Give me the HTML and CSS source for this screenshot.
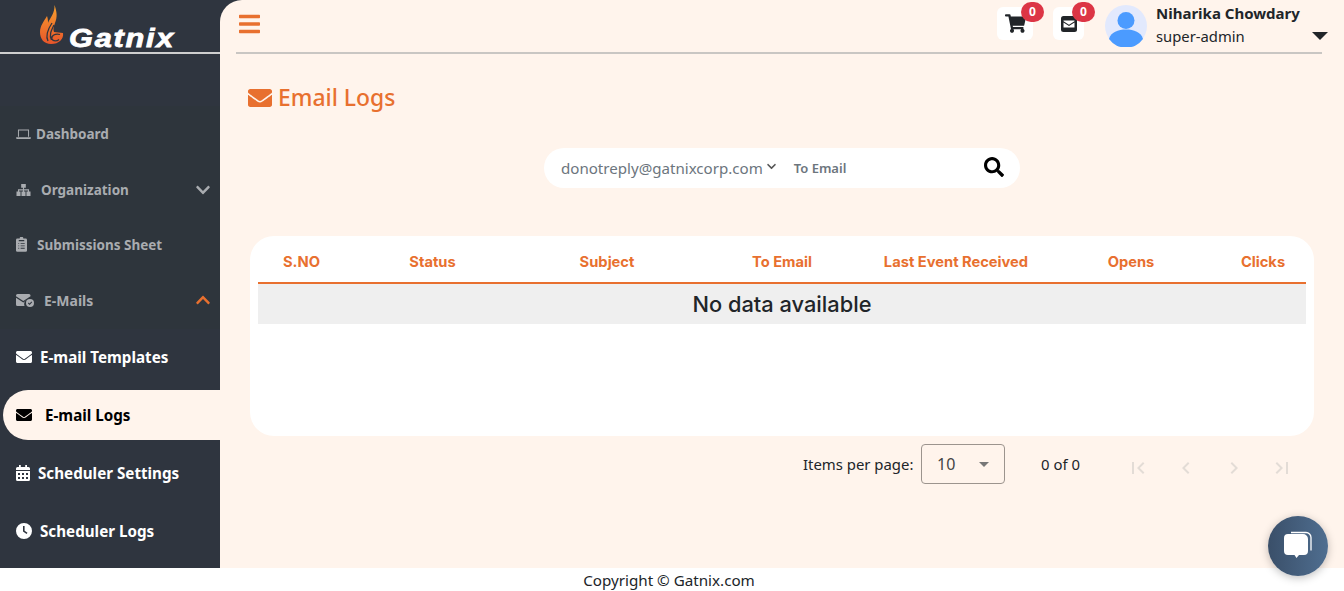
FILE: index.html
```html
<!DOCTYPE html>
<html lang="en">
<head>
<meta charset="utf-8">
<title>Email Logs</title>
<link rel="stylesheet" href="styles.css">
</head>
<body>
<svg class="defs" width="0" height="0" aria-hidden="true">
  <defs>
    <symbol id="i-env" viewBox="0 0 512 512"><path d="M502.3 190.8c3.9-3.1 9.7-.2 9.7 4.7V400c0 26.5-21.5 48-48 48H48c-26.5 0-48-21.5-48-48V195.6c0-5 5.7-7.8 9.7-4.7 22.4 17.4 52.1 39.5 154.1 113.6 21.1 15.4 56.7 47.8 92.2 47.6 35.7.3 72-32.8 92.3-47.6 102-74.1 131.6-96.3 154-113.7zM256 320c23.2.4 56.6-29.2 73.4-41.4 132.7-96.3 142.8-104.7 173.4-128.7 5.8-4.5 9.2-11.5 9.2-18.9v-19c0-26.5-21.5-48-48-48H48C21.5 64 0 85.5 0 112v19c0 7.4 3.4 14.3 9.2 18.9 30.6 23.9 40.7 32.4 173.4 128.7 16.8 12.2 50.2 41.8 73.4 41.4z"/></symbol>
    <symbol id="i-chev" viewBox="0 0 448 512"><path d="M207.029 381.476L12.686 187.132c-9.373-9.373-9.373-24.569 0-33.941l22.667-22.667c9.357-9.357 24.522-9.375 33.901-.04L224 284.505l154.745-154.021c9.379-9.335 24.544-9.317 33.901.04l22.667 22.667c9.373 9.373 9.373 24.569 0 33.941L240.971 381.476c-9.373 9.372-24.569 9.372-33.942 0z"/></symbol>
  </defs>
</svg>
<div class="shell">
  <aside class="sidebar">
    <div class="brand">
      <svg class="flame" viewBox="0 0 24 40">
        <defs><linearGradient id="fl" x1="0" y1="0" x2="0" y2="1"><stop offset="0" stop-color="#f6a02e"/><stop offset="1" stop-color="#e8552a"/></linearGradient></defs>
        <path fill="url(#fl)" d="M14.500 0C17 7 17.500 12 15 18 13.500 22 13 25 14 27L23 28C24 34 19 39 11 39 4 39 0 34 0 27 0 21 4 16 7 11 8 14 8 16 8 18 10 13 15 8 14.500 0z"/>
        <path fill="none" stroke="#2f353f" stroke-width="1.300" d="M8 36C5 30 8 24 12 18M11.500 35C9 30 11 26 14 20M20 29.500C15 28 11 31 12 34 13 36.500 17 36.500 19 34.500"/>
      </svg>
      <span class="brand-name">Gatnix</span>
    </div>
    <nav class="nav">
      <a class="item"><svg class="ico ico-laptop" viewBox="0 0 16 12"><path fill="none" stroke="currentColor" stroke-width="1.1" d="M2.5 8.5V1h11v7.5"/><path fill="currentColor" d="M0 9h16v1a1.5 1.5 0 0 1-1.5 1h-13A1.5 1.5 0 0 1 0 10z"/></svg><span>Dashboard</span></a>
      <a class="item"><svg class="ico ico-map" viewBox="0 0 16 13"><path fill="currentColor" d="M5.5 0h5v4H8.6v1.8H14v2.4h1.6V13h-4.4V8.2h1.6V7H8.6v1.2h1.6V13H5.8V8.2h1.6V7H3.2v1.2h1.6V13H.4V8.2H2V5.8h5.4V4H5.5z"/></svg><span>Organization</span><svg class="chev"><use href="#i-chev"/></svg></a>
      <a class="item"><svg class="ico ico-clip" viewBox="0 0 12 16"><path fill="currentColor" fill-rule="evenodd" d="M4 1.5a2 2 0 0 1 4 0h2.5A1.5 1.5 0 0 1 12 3v11.5a1.5 1.5 0 0 1-1.500 1.500h-9A1.500 1.500 0 0 1 0 14.500V3a1.500 1.500 0 0 1 1.500-1.500zM3 3h6v1.500H3zM2.500 6.500h1v1h-1zM5 6.500h4.500v1H5zM2.500 9h1v1h-1zM5 9h4.500v1H5zM2.500 11.500h1v1h-1zM5 11.500h4.500v1H5z"/></svg><span>Submissions Sheet</span></a>
      <a class="item item-mails"><svg class="ico ico-mailcheck" viewBox="0 0 18 13"><path fill="currentColor" d="M0 1.500A1.500 1.500 0 0 1 1.500 0h11.500A1.500 1.500 0 0 1 14.500 1.500v.8L7.300 7 0 2.300zM0 3.700l7.300 4.700 4-2.600a5 5 0 0 0-2.800 6.200H1.500A1.500 1.500 0 0 1 0 10.500z"/><circle cx="14" cy="9" r="4" fill="currentColor"/><path fill="none" stroke="#2f353f" stroke-width="1.100" d="M12.300 9l1.300 1.300 2.200-2.400"/></svg><span class="mails-label">E-Mails</span><svg class="chev chev-up"><use href="#i-chev"/></svg></a>
      <div class="subnav">
        <a class="sub"><svg class="sico"><use href="#i-env"/></svg><span>E-mail Templates</span></a>
        <a class="sub active"><svg class="sico"><use href="#i-env"/></svg><span>E-mail Logs</span></a>
        <a class="sub"><svg class="sico sico-cal" viewBox="0 0 14 16"><path fill="currentColor" fill-rule="evenodd" d="M3 0h1.800v2h4.400V0H11v2h1.500A1.500 1.500 0 0 1 14 3.500V5H0V3.500A1.500 1.500 0 0 1 1.500 2H3zM0 6h14v8.500a1.500 1.500 0 0 1-1.500 1.500h-11A1.500 1.500 0 0 1 0 14.500zM2 8v2h2V8zm4 0v2h2V8zm4 0v2h2V8zM2 12v2h2v-2zm4 0v2h2v-2zm4 0v2h2v-2z"/></svg><span>Scheduler Settings</span></a>
        <a class="sub"><svg class="sico" viewBox="0 0 16 16"><path fill="currentColor" fill-rule="evenodd" d="M8 0a8 8 0 1 1 0 16A8 8 0 0 1 8 0zM7 3v5.500l3.600 2.500.9-1.200L8.600 7.800V3z"/></svg><span>Scheduler Logs</span></a>
      </div>
    </nav>
  </aside>

  <main class="main">
    <header class="topbar">
      <svg class="menu" viewBox="0 0 448 512"><path d="M16 132h416c8.837 0 16-7.163 16-16V76c0-8.837-7.163-16-16-16H16C7.163 60 0 67.163 0 76v40c0 8.837 7.163 16 16 16zm0 160h416c8.837 0 16-7.163 16-16v-40c0-8.837-7.163-16-16-16H16c-8.837 0-16 7.163-16 16v40c0 8.837 7.163 16 16 16zm0 160h416c8.837 0 16-7.163 16-16v-40c0-8.837-7.163-16-16-16H16c-8.837 0-16 7.163-16 16v40c0 8.837 7.163 16 16 16z"/></svg>
      <div class="top-right">
        <div class="tool tool-cart">
          <svg class="cart" viewBox="0 0 576 512"><path d="M528.12 301.319l47.273-208C578.806 78.301 567.391 64 551.99 64H159.208l-9.166-44.81C147.758 8.021 137.93 0 126.529 0H24C10.745 0 0 10.745 0 24v16c0 13.255 10.745 24 24 24h69.883l70.248 343.435C147.325 417.1 136 435.222 136 456c0 30.928 25.072 56 56 56s56-25.072 56-56c0-15.674-6.447-29.835-16.824-40h209.647C430.447 426.165 424 440.326 424 456c0 30.928 25.072 56 56 56s56-25.072 56-56c0-22.172-12.888-41.332-31.579-50.405l5.517-24.276c3.413-15.018-8.002-29.319-23.403-29.319H218.117l-6.545-32h293.145c11.206 0 20.920-7.754 23.403-18.681z"/></svg>
          <span class="badge">0</span>
        </div>
        <div class="tool tool-mail">
          <svg class="mailbox" viewBox="0 0 16 16"><rect width="16" height="16" rx="2.500" fill="#212529"/><path fill="#fff" d="M2.500 4.500h11v.8L8 8.800 2.500 5.300zM2.500 6.500L8 10l5.500-3.500v5h-11z"/></svg>
          <span class="badge">0</span>
        </div>
        <svg class="avatar" viewBox="0 0 42 42"><circle cx="21" cy="21" r="21" fill="#e2e9fd"/><circle cx="21" cy="15.500" r="8.500" fill="#4b9bff"/><path fill="#4b9bff" d="M4 34c2-7 9-9.500 17-9.500S36 27 38 34a21 21 0 0 1-34 0z"/></svg>
        <div class="user">
          <div class="user-name">Niharika Chowdary</div>
          <div class="user-role">super-admin</div>
        </div>
        <span class="caret"></span>
      </div>
    </header>

    <h1 class="title"><svg class="title-ico"><use href="#i-env"/></svg>Email Logs</h1>

    <div class="search">
      <span class="from">donotreply@gatnixcorp.com</span>
      <svg class="from-chev"><use href="#i-chev"/></svg>
      <span class="to">To Email</span>
      <svg class="mag" viewBox="0 0 512 512"><path d="M505 442.700L405.300 343c-4.500-4.500-10.600-7-17-7H372c27.600-35.300 44-79.700 44-128C416 93.100 322.900 0 208 0S0 93.100 0 208s93.100 208 208 208c48.300 0 92.700-16.400 128-44v16.300c0 6.400 2.500 12.500 7 17l99.700 99.700c9.400 9.400 24.600 9.400 33.900 0l28.300-28.300c9.400-9.400 9.400-24.600.1-34zM208 336c-70.700 0-128-57.200-128-128 0-70.700 57.200-128 128-128 70.700 0 128 57.200 128 128 0 70.700-57.200 128-128 128z"/></svg>
    </div>

    <section class="card">
      <div class="thead">
        <span>S.NO</span><span>Status</span><span>Subject</span><span>To Email</span><span>Last Event Received</span><span>Opens</span><span>Clicks</span>
      </div>
      <div class="nodata">No data available</div>
    </section>

    <div class="pager">
      <span class="pager-label">Items per page:</span>
      <div class="pager-select"><span>10</span><i class="pager-arrow"></i></div>
      <span class="pager-range">0 of 0</span>
      <div class="pager-btns">
        <svg viewBox="0 0 24 24"><path d="M18.410 16.590L13.820 12l4.590-4.590L17 6l-6 6 6 6zM6 6h2v12H6z"/></svg>
        <svg viewBox="0 0 24 24"><path d="M15.410 7.410L14 6l-6 6 6 6 1.410-1.410L10.830 12z"/></svg>
        <svg viewBox="0 0 24 24"><path d="M10 6L8.590 7.410 13.170 12l-4.580 4.590L10 18l6-6z"/></svg>
        <svg viewBox="0 0 24 24"><path d="M5.590 7.410L10.180 12l-4.590 4.590L7 18l6-6-6-6zM16 6h2v12h-2z"/></svg>
      </div>
    </div>
  </main>
</div>
<footer class="footer">Copyright © Gatnix.com</footer>
<button class="chat" aria-label="Chat">
  <svg viewBox="0 0 32 32"><path fill="none" stroke="#fff" stroke-width="1.300" d="M9 2.500h15a5 5 0 0 1 5 5v13"/><path fill="#fff" d="M6 4h15a5 5 0 0 1 5 5v12a4 4 0 0 1-4 4h-5l-2.500 3-2-3H6a4 4 0 0 1-4-4V8a4 4 0 0 1 4-4z"/></svg>
</button>
</body>
</html>
```
FILE: styles.css
```css
* { box-sizing: border-box; }
html, body { margin: 0; height: 591px; overflow: hidden; background: #fff; }
body { font-family: "Noto Sans", "Open Sans", sans-serif; color: #212529; position: relative; }
.defs { position: absolute; }

.shell { display: grid; grid-template-columns: 220px 1fr; height: 568px; background: #2f353f; }

/* sidebar */
.sidebar { display: flex; flex-direction: column; }
.brand { height: 54px; border-bottom: 2px solid #cfcfcf; display: flex; align-items: flex-start; padding: 5px 0 0 40px; gap: 5px; }
.flame { width: 24px; height: 40px; }
.brand-name { font: italic 700 26px/1 "Liberation Sans", sans-serif; color: #fff; letter-spacing: 1.500px; margin-top: 20px; -webkit-text-stroke: .8px #fff; transform: scaleX(1.18); transform-origin: left center; }
.nav { padding-top: 52px; display: flex; flex-direction: column; }
.item { height: 56px; display: flex; align-items: center; padding: 0 10px 0 16px; color: #a9acb0; font-weight: 700; font-size: 13.500px; background: #2e353c; }
.item:nth-child(3) { height: 55px; padding-bottom: 2px; }
.item-mails { padding-bottom: 2px; }
.ico { flex: none; color: #a9acb0; }
.ico-laptop { width: 15px; height: 11px; margin-right: 5px; }
.ico-map { width: 15px; height: 12px; margin-right: 10px; }
.ico-clip { width: 11px; height: 15px; margin-right: 10px; }
.ico-mailcheck { width: 18px; height: 13px; margin-right: 10px; }
.mails-label { font-size: 14px; }
.chev { width: 14px; height: 16px; margin-left: auto; fill: #a9acb0; }
.chev-up { fill: #e8702f; transform: rotate(180deg); }
.subnav { padding-top: 3px; display: flex; flex-direction: column; gap: 8px; }
.sub { height: 50px; margin-left: 3px; padding-left: 13px; display: flex; align-items: center; color: #fff; font-weight: 700; font-size: 15.200px; border-radius: 25px 0 0 25px; }
.sub.active { background: #fff4ec; color: #000; }
.sico { width: 16px; height: 16px; fill: #fff; flex: none; margin-right: 8px; }
.active .sico { fill: #000; margin-right: 13px; }
.sico-cal { width: 14px; }

/* main */
.main { background: #fff4ec; border-radius: 22px 0 0 0; padding: 0 22px 0 16px; display: flex; flex-direction: column; min-width: 0; }
.topbar { height: 54px; border-bottom: 2px solid #c9c6c3; display: flex; align-items: flex-start; justify-content: space-between; }
.menu { width: 21px; height: 24px; fill: #e8702f; margin: 12px 0 0 3px; }
.top-right { display: flex; align-items: flex-start; margin-right: -6px; }
.tool { position: relative; height: 33px; margin-top: 7px; background: #fff; border-radius: 6px; display: flex; align-items: center; justify-content: center; }
.tool-cart { width: 36px; margin-right: 20px; }
.tool-mail { width: 31px; margin-right: 21px; }
.cart { width: 21px; height: 19px; fill: #212529; margin: 0 0 0 1px; }
.mailbox { width: 16px; height: 16px; }
.badge { position: absolute; right: -11px; top: -5px; width: 23px; height: 20px; border-radius: 10px; background: #dc3545; color: #fff; font-size: 12px; font-weight: 700; line-height: 20px; text-align: center; }
.avatar { width: 42px; height: 42px; margin-top: 5px; flex: none; }
.user { margin-left: 9px; width: 156px; }
.user-name { font-size: 15px; font-weight: 700; line-height: 20px; margin-top: 3px; color: #212529; }
.user-role { font-size: 14.800px; line-height: 20px; margin-top: 3px; color: #212529; }
.caret { width: 0; height: 0; border: 8px solid transparent; border-top: 8px solid #212529; border-bottom: 0; margin-top: 32px; }

.title { margin: 30px 0 0 12px; height: 28px; font-size: 22.900px; font-weight: 500; line-height: 28px; color: #e8702f; display: flex; align-items: center; gap: 6px; }
.title-ico { width: 24px; height: 24px; fill: #e8702f; }

.search { margin: 36px 0 0 308px; width: 476px; height: 40px; background: #fff; border-radius: 20px; display: flex; align-items: center; padding: 0 16px 0 17px; color: #6c757d; }
.from { font-size: 15.100px; }
.from-chev { width: 9px; height: 11px; fill: #555; margin: -4px 0 0 4px; }
.to { font-size: 13px; font-weight: 600; margin-left: 18px; color: #6c757d; }
.mag { width: 20px; height: 20px; margin-left: auto; fill: #000; margin-top: -2px; }

.card { margin: 48px 0 0 14px; width: 1064px; height: 200px; background: #fff; border-radius: 24px; padding: 0 8px; }
.thead { display: grid; grid-template-columns: 87px 175px 174px 176px 172px 178px 86px; height: 48px; padding-top: 7px; border-bottom: 2px solid #e8702f; align-items: center; text-align: center; font: 700 14.700px/1 "Inter", sans-serif; color: #e8702f; }
.nodata { height: 40px; background: #efefef; text-align: center; font: 500 21.800px/40px "Inter", sans-serif; color: #212529; }

.pager { display: flex; align-items: flex-start; margin: 8px 0 0 567px; font-size: 14.900px; line-height: 20px; }
.pager-label { margin-top: 10px; width: 118px; }
.pager-select { width: 84px; height: 40px; border: 1px solid #9c948e; border-radius: 4px; display: flex; align-items: center; justify-content: space-between; padding: 0 15px; font-size: 16px; color: #444; }
.pager-arrow { width: 0; height: 0; border: 5px solid transparent; border-top: 5px solid #777; border-bottom: 0; }
.pager-range { margin: 10px 0 0 36px; width: 85px; }
.pager-btns { display: flex; gap: 24px; margin-top: 12px; }
.pager-btns svg { width: 24px; height: 24px; fill: #e3dcd6; }

.footer { height: 23px; text-align: center; font-size: 15.200px; line-height: 25px; padding-right: 6px; color: #212529; }

.chat { position: absolute; left: 1268px; top: 516px; width: 60px; height: 60px; border-radius: 50%; border: 0; padding: 14px; background: linear-gradient(90deg, #3a4f69, #4f6e90); box-shadow: 0 2px 8px rgba(0,0,0,.25); }
.chat svg { display: block; width: 32px; height: 32px; }
```
